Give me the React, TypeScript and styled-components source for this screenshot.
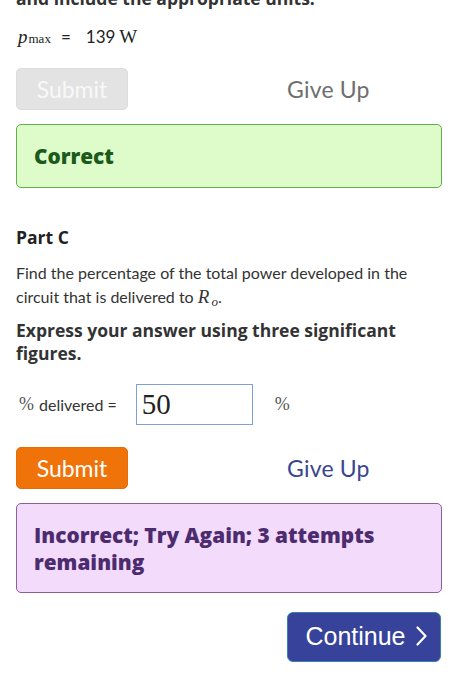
import React from "react";
import styled, { createGlobalStyle } from "styled-components";

const Global = createGlobalStyle`
  html, body { margin: 0; padding: 0; background: #fff; }
  body { font-family: "Lato", "Open Sans", sans-serif; color: #333; overflow: hidden; }
`;

const Page = styled.div`
  width: 458px;
  height: 700px;
  padding: 0 16px;
  box-sizing: border-box;
  overflow: hidden;
`;

const Cut = styled.div`
  margin-top: -12px;
  font-family: "Open Sans", sans-serif;
  font-weight: 700;
  font-size: 17.5px;
  line-height: 20px;
  color: #333;
`;

const MathRow = styled.div`
  margin-top: 18px;
  padding-left: 2px;
  display: flex;
  align-items: baseline;
  font-size: 17px;
  color: #222;
  height: 26px;
`;

const Serif = styled.span<{ $italic?: boolean }>`
  font-family: "Liberation Serif", "DejaVu Serif", serif;
  font-style: ${(p) => (p.$italic ? "italic" : "normal")};
  font-size: 19px;
`;

const Sub = styled.sub`
  font-family: "Liberation Serif", serif;
  font-size: 13px;
  vertical-align: -3px;
  margin-left: 1px;
`;

const Eq = styled.span`
  margin: 0 15px 0 10px;
  font-size: 17px;
`;

const ButtonRow = styled.div<{ $mt: number }>`
  display: grid;
  grid-template-columns: 271px 1fr;
  align-items: center;
  margin-top: ${(p) => p.$mt}px;
`;

const SubmitBtn = styled.button<{ $disabled?: boolean }>`
  width: 112px;
  height: 42px;
  border-radius: 5px;
  border: 1px solid ${(p) => (p.$disabled ? "#dcdcdc" : "#e46d08")};
  background: ${(p) => (p.$disabled ? "#e3e3e3" : "#ef7309")};
  color: ${(p) => (p.$disabled ? "#f8f8f8" : "#fff")};
  font-family: "Lato", sans-serif;
  font-size: 23px;
  padding: 0 0 1px;
`;

const GiveUp = styled.span<{ $muted?: boolean }>`
  font-size: 23px;
  color: ${(p) => (p.$muted ? "#6e6e6e" : "#3a4590")};
  letter-spacing: 0.2px;
`;

const Feedback = styled.div<{ $kind: "ok" | "bad"; $mt: number }>`
  margin-top: ${(p) => p.$mt}px;
  border-radius: 5px;
  border: 1.5px solid ${(p) => (p.$kind === "ok" ? "#62ae4c" : "#8b5e9c")};
  background: ${(p) => (p.$kind === "ok" ? "#ddfcc9" : "#f3dbfb")};
  color: ${(p) => (p.$kind === "ok" ? "#1c5a1c" : "#4d2b6f")};
  font-family: "Open Sans", sans-serif;
  font-weight: 800;
  font-size: 20.8px;
  line-height: 27px;
  padding: ${(p) => (p.$kind === "ok" ? "18px 17px 17px" : "18px 17px 16px")};
`;

const PartTitle = styled.h2`
  margin: 37px 0 0;
  font-family: "Open Sans", sans-serif;
  font-size: 17.5px;
  font-weight: 700;
  color: #222;
  line-height: 24px;
`;

const Para = styled.p`
  margin: 12px 0 0;
  font-size: 16px;
  line-height: 24px;
  color: #333;
`;

const MathVar = styled.span`
  font-family: "Liberation Serif", serif;
  font-style: italic;
  font-size: 19px;
`;

const Strong = styled.p`
  margin: 5px 0 0;
  font-family: "Open Sans", sans-serif;
  font-size: 17.5px;
  line-height: 23px;
  font-weight: 700;
  color: #333;
`;

const AnswerRow = styled.div`
  margin-top: 19px;
  display: flex;
  align-items: center;
  padding-left: 3px;
`;

const Label = styled.span`
  font-size: 16px;
  color: #333;
  margin-right: 19px;
  display: flex;
  align-items: center;
  gap: 5px;
`;

const PctSerif = styled.span`
  font-family: "Liberation Serif", serif;
  font-size: 18px;
  color: #555;
`;

const Input = styled.div`
  width: 117px;
  height: 41px;
  box-sizing: border-box;
  border: 1.5px solid #7e9fd8;
  font-family: "Liberation Serif", serif;
  font-size: 29px;
  color: #222;
  padding-left: 5px;
  display: flex;
  align-items: center;
`;

const Unit = styled.span`
  margin-left: 22px;
  font-family: "Liberation Serif", serif;
  font-size: 18px;
  color: #555;
`;

const Footer = styled.div`
  display: flex;
  justify-content: flex-end;
  margin-top: 19px;
  padding-right: 1px;
`;

const ContinueBtn = styled.button`
  width: 154px;
  height: 50px;
  border-radius: 6px;
  border: 1px solid #3b7fae;
  background: #37439a;
  color: #fff;
  font-family: "Liberation Sans", Arial, sans-serif;
  font-size: 25px;
  padding: 0 0 2px 4px;
  display: flex;
  align-items: center;
  justify-content: center;
  gap: 10px;
`;

export default function App() {
  return (
    <>
      <Global />
      <Page>
        <Cut>and include the appropriate units.</Cut>
        <MathRow>
          <Serif $italic>p</Serif>
          <Sub>max</Sub>
          <Eq>=</Eq>
          <span>139</span>
          <Serif style={{ marginLeft: 4 }}>W</Serif>
        </MathRow>
        <ButtonRow $mt={16}>
          <SubmitBtn $disabled>Submit</SubmitBtn>
          <GiveUp $muted>Give Up</GiveUp>
        </ButtonRow>
        <Feedback $kind="ok" $mt={14}>Correct</Feedback>
        <PartTitle>Part C</PartTitle>
        <Para>
          Find the percentage of the total power developed in the circuit that is delivered to{" "}
          <MathVar>R</MathVar>
          <Sub style={{ fontStyle: "italic", marginLeft: 2 }}>o</Sub>.
        </Para>
        <Strong>Express your answer using three significant figures.</Strong>
        <AnswerRow>
          <Label>
            <PctSerif>%</PctSerif> delivered =
          </Label>
          <Input>50</Input>
          <Unit>%</Unit>
        </AnswerRow>
        <ButtonRow $mt={22}>
          <SubmitBtn>Submit</SubmitBtn>
          <GiveUp>Give Up</GiveUp>
        </ButtonRow>
        <Feedback $kind="bad" $mt={14}>Incorrect; Try Again; 3 attempts remaining</Feedback>
        <Footer>
          <ContinueBtn>
            Continue
            <svg width="11" height="20" viewBox="0 0 11 20" fill="none">
              <path d="M1.5 1.5 L9.5 10 L1.5 18.5" stroke="#fff" strokeWidth="2.2" strokeLinecap="round" strokeLinejoin="round" />
            </svg>
          </ContinueBtn>
        </Footer>
      </Page>
    </>
  );
}
